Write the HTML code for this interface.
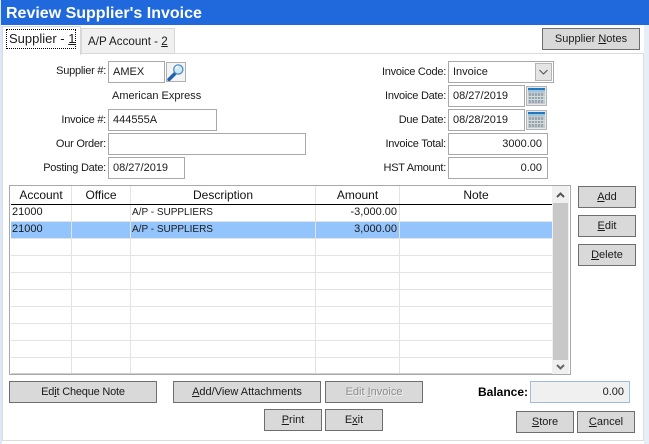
<!DOCTYPE html>
<html><head><meta charset="utf-8">
<style>
html,body{margin:0;padding:0;background:#fff}
#w{position:relative;width:649px;height:444px;overflow:hidden;background:#fff;font:11px "Liberation Sans",Arial,sans-serif;color:#1a1a1a}
#w div{position:absolute;box-sizing:border-box}
.f{background:#fff;border:1px solid #a8a8a8;line-height:20px;padding-left:4px;white-space:nowrap}
.r{text-align:right;padding:0 5px 0 0}
.l{text-align:right;white-space:nowrap;line-height:16px;letter-spacing:-.25px}
.b{background:#d9d9d9;border:1px solid #6e6e6e;text-align:center;line-height:20px;white-space:nowrap}
.h{top:187px;height:18px;line-height:17px;text-align:center;color:#111;font-size:12px}
.c{line-height:17px;white-space:nowrap;height:17px}
.v{background:#e3e3e3;width:1px;top:205px;height:168px}
.o{background:#e3e3e3;height:1px;left:11px;width:541px}
.hs{background:#e3e3e3;width:1px;top:186px;height:18px}
</style></head><body>
<div id="w">
<div style="left:0;top:0;width:2px;height:444px;background:#dce8f8"></div>
<div style="left:644px;top:25px;width:5px;height:419px;background:#e8eef8"></div>
<div style="left:1px;top:0;width:648px;height:25px;background:#1f69dd"></div>
<div style="left:6px;top:4px;height:20px;line-height:20px;font-weight:bold;font-size:16px;color:#fff;white-space:nowrap">Review Supplier's Invoice</div>

<div style="left:2px;top:53px;width:642px;height:388px;border:1px solid #dcdcdc;background:#fff"></div>
<div style="left:81px;top:28px;width:94px;height:26px;background:#f0f0f0;border:1px solid #d8d8d8"></div>
<div style="left:2px;top:26px;width:79px;height:29px;background:#fff;border:1px solid #d8d8d8;border-bottom:0"></div>
<div style="left:6px;top:29px;width:70px;height:20px;border:1px dotted #000"></div>
<div style="left:9px;top:31px;line-height:16px;white-space:nowrap;font-size:13px">Supplier - <u>1</u></div>
<div style="left:88px;top:34px;line-height:16px;white-space:nowrap;font-size:11.6px">A/P Account - <u>2</u></div>
<div class="b" style="left:542px;top:28px;width:98px;height:22px">Supplier <u>N</u>otes</div>

<div class="l" style="left:20px;top:63px;width:86px">Supplier #:</div>
<div class="f" style="left:108px;top:61px;width:57px;height:22px">AMEX</div>
<div style="left:166px;top:62px;width:20px;height:20px;border:1px solid #b0b0b0;background:#f4f4f4">
<svg width="18" height="18" viewBox="0 0 18 18" style="display:block"><path d="M2 16.5 L8 10.5" stroke="#1d5fb0" stroke-width="3.4" stroke-linecap="round"/><circle cx="11.3" cy="6.5" r="4.6" fill="#cfe8f8" stroke="#4f8fc4" stroke-width="1.3"/><path d="M8.5 5.5 A3 3 0 0 1 11 3.4" stroke="#fff" stroke-width="1.3" fill="none"/></svg></div>
<div style="left:112px;top:88px;line-height:16px;white-space:nowrap">American Express</div>
<div class="l" style="left:20px;top:112px;width:86px">Invoice #:</div>
<div class="f" style="left:108px;top:109px;width:109px;height:22px">444555A</div>
<div class="l" style="left:20px;top:136px;width:86px">Our Order:</div>
<div class="f" style="left:108px;top:133px;width:198px;height:22px"></div>
<div class="l" style="left:20px;top:160px;width:86px">Posting Date:</div>
<div class="f" style="left:108px;top:157px;width:77px;height:22px">08/27/2019</div>

<div class="l" style="left:350px;top:64px;width:96px">Invoice Code:</div>
<div class="f" style="left:448px;top:61px;width:106px;height:22px;padding-left:4px">Invoice</div>
<div style="left:535px;top:63px;width:17px;height:18px;background:#e4e4e4;border:1px solid #b4b4b4">
<svg width="15" height="16" viewBox="0 0 15 16" style="display:block"><path d="M3.5 6 L7.5 10 L11.5 6" stroke="#555" stroke-width="1.1" fill="none"/></svg></div>
<div class="l" style="left:350px;top:88px;width:96px">Invoice Date:</div>
<div class="f" style="left:448px;top:85px;width:77px;height:22px">08/27/2019</div>
<div class="l" style="left:350px;top:112px;width:96px">Due Date:</div>
<div class="f" style="left:448px;top:109px;width:77px;height:22px">08/28/2019</div>
<div style="left:526px;top:86px;width:21px;height:20px;border:1px solid #b4b4b4;background:#e4e8ea">
<svg width="19" height="18" viewBox="0 0 19 18" style="display:block"><rect x="1" y="1" width="17" height="2" fill="#1f78c0"/><rect x="1" y="3" width="17" height="2" fill="#9fc3da"/><rect x="1" y="5" width="17" height="12" fill="#c3ccd2"/><path d="M3 6v10M6 6v10M9 6v10M12 6v10M15 6v10" stroke="#8f9ba5" stroke-width="1.6"/><path d="M1 9.5h17M1 12.5h17" stroke="#d5dce0" stroke-width="1"/></svg></div>
<div style="left:526px;top:110px;width:21px;height:20px;border:1px solid #b4b4b4;background:#e4e8ea">
<svg width="19" height="18" viewBox="0 0 19 18" style="display:block"><rect x="1" y="1" width="17" height="2" fill="#1f78c0"/><rect x="1" y="3" width="17" height="2" fill="#9fc3da"/><rect x="1" y="5" width="17" height="12" fill="#c3ccd2"/><path d="M3 6v10M6 6v10M9 6v10M12 6v10M15 6v10" stroke="#8f9ba5" stroke-width="1.6"/><path d="M1 9.5h17M1 12.5h17" stroke="#d5dce0" stroke-width="1"/></svg></div>
<div class="l" style="left:350px;top:136px;width:96px">Invoice Total:</div>
<div class="f r" style="left:448px;top:133px;width:100px;height:22px">3000.00</div>
<div class="l" style="left:350px;top:160px;width:96px">HST Amount:</div>
<div class="f r" style="left:448px;top:157px;width:100px;height:22px">0.00</div>

<!-- grid -->
<div style="left:9px;top:185px;width:562px;height:190px;border:1px solid #a8a8a8;background:#fff"></div>
<div style="left:11px;top:222px;width:541px;height:17px;background:#94c4fc"></div>
<div style="left:11px;top:204px;width:541px;height:1px;background:#000"></div>
<div class="o" style="top:221px"></div><div class="o" style="top:238px"></div><div class="o" style="top:255px"></div>
<div class="o" style="top:272px"></div><div class="o" style="top:289px"></div><div class="o" style="top:306px"></div>
<div class="o" style="top:323px"></div><div class="o" style="top:340px"></div><div class="o" style="top:357px"></div>
<div class="o" style="top:373px;background:#cfcfcf"></div>
<div class="hs" style="left:71px"></div><div class="hs" style="left:130px"></div><div class="hs" style="left:315px"></div><div class="hs" style="left:399px"></div>
<div class="v" style="left:71px"></div><div class="v" style="left:130px"></div><div class="v" style="left:315px"></div><div class="v" style="left:399px"></div>
<div class="h" style="left:11px;width:60px">Account</div>
<div class="h" style="left:72px;width:58px">Office</div>
<div class="h" style="left:131px;width:184px">Description</div>
<div class="h" style="left:316px;width:83px">Amount</div>
<div class="h" style="left:400px;width:152px">Note</div>
<div class="c" style="left:12px;top:204px">21000</div>
<div class="c" style="left:132px;top:204px;font-size:10px">A/P - SUPPLIERS</div>
<div class="c" style="left:316px;top:204px;width:81px;text-align:right">-3,000.00</div>
<div class="c" style="left:12px;top:221px">21000</div>
<div class="c" style="left:132px;top:221px;font-size:10px">A/P - SUPPLIERS</div>
<div class="c" style="left:316px;top:221px;width:81px;text-align:right">3,000.00</div>
<div style="left:552px;top:186px;width:17px;height:188px;background:#f0f0f0"></div>
<div style="left:553px;top:203px;width:15px;height:157px;background:#c8c8c8"></div>
<svg style="position:absolute;left:552px;top:188px" width="17" height="14" viewBox="0 0 17 14"><path d="M5 9 L8.5 5.5 L12 9" stroke="#555" stroke-width="2" fill="none"/></svg>
<svg style="position:absolute;left:552px;top:360px" width="17" height="14" viewBox="0 0 17 14"><path d="M5 5 L8.5 8.5 L12 5" stroke="#666" stroke-width="2" fill="none"/></svg>

<div class="b" style="left:578px;top:186px;width:58px;height:22px"><u>A</u>dd</div>
<div class="b" style="left:578px;top:215px;width:58px;height:22px"><u>E</u>dit</div>
<div class="b" style="left:578px;top:244px;width:58px;height:22px"><u>D</u>elete</div>
<div class="b" style="left:9px;top:381px;width:148px;height:22px;letter-spacing:-.2px">Ed<u>i</u>t Cheque Note</div>
<div class="b" style="left:173px;top:381px;width:148px;height:22px"><u>A</u>dd/View Attachments</div>
<div class="b" style="left:325px;top:381px;width:98px;height:22px;color:#8c8c8c;text-shadow:1px 1px 0 #f2f2f2">Edit <u>I</u>nvoice</div>
<div class="b" style="left:264px;top:409px;width:58px;height:22px"><u>P</u>rint</div>
<div class="b" style="left:325px;top:409px;width:58px;height:22px">E<u>x</u>it</div>
<div style="left:478px;top:384px;line-height:16px;font-weight:bold;font-size:12px;color:#000;white-space:nowrap">Balance:</div>
<div style="left:530px;top:381px;width:100px;height:22px;background:#f0f0f0;border:1px solid #a0bcdc;text-align:right;padding-right:5px;line-height:20px">0.00</div>
<div class="b" style="left:516px;top:411px;width:58px;height:22px"><u>S</u>tore</div>
<div class="b" style="left:577px;top:411px;width:58px;height:22px"><u>C</u>ancel</div>
</div>
</body></html>
